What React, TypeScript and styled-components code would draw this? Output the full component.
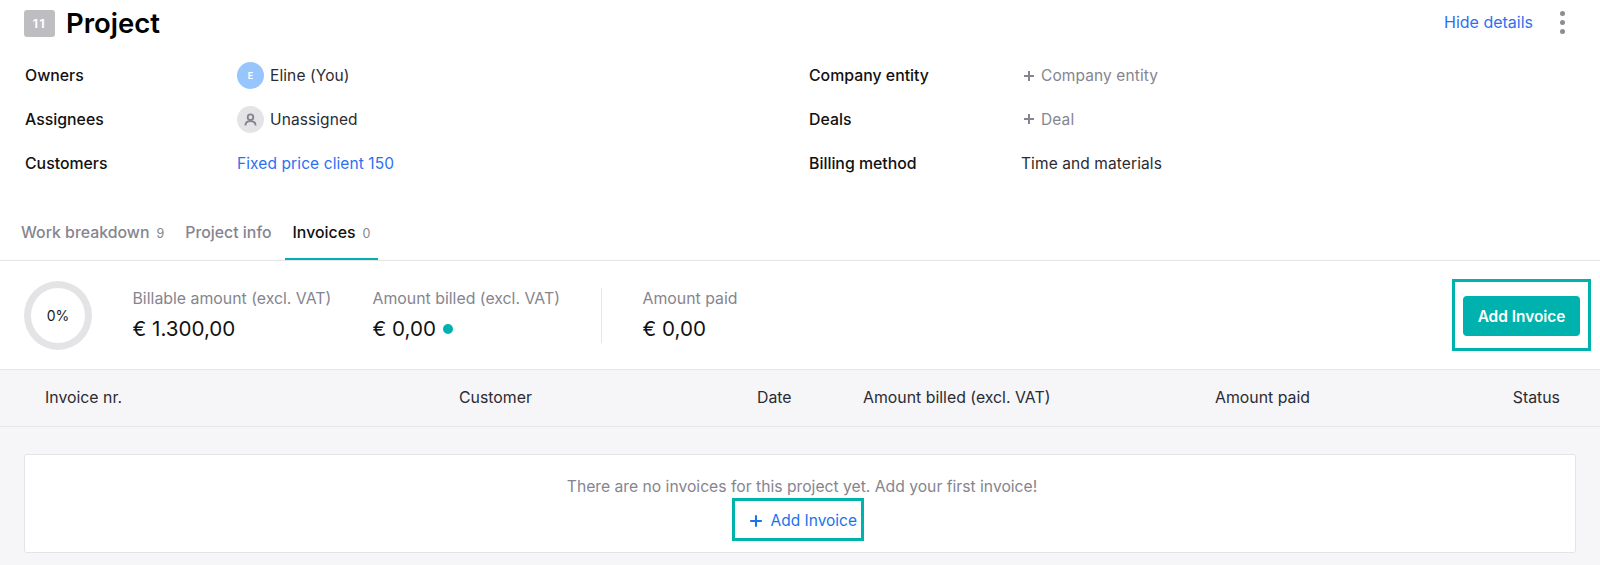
import React from 'react';
import styled, { createGlobalStyle } from 'styled-components';

const GlobalStyle = createGlobalStyle`
  html, body { margin: 0; padding: 0; background: #fff; }
  body { font-family: Inter, "Liberation Sans", sans-serif; color: #1a1a22; width: 1600px; height: 565px; overflow: hidden; }
  * { box-sizing: border-box; }
`;

const TEAL = '#00b2ad';
const BLUE = '#2e6ff2';
const GREY = '#85858f';

const Page = styled.div`
  width: 1600px;
  height: 565px;
  display: flex;
  flex-direction: column;
`;

const Header = styled.header`
  height: 47px;
  padding: 10px 0 0 24px;
  display: flex;
  align-items: flex-start;
`;

const Badge = styled.span`
  width: 31px;
  height: 27px;
  border-radius: 3px;
  background: #bdbdc2;
  color: #fff;
  font-size: 12px;
  font-weight: 700;
  letter-spacing: 1.5px;
  display: flex;
  align-items: center;
  justify-content: center;
`;

const Title = styled.h1`
  margin: 0 0 0 11px;
  font-size: 27.5px;
  line-height: 27px;
  font-weight: 600;
  color: #000;
`;

const HideLink = styled.a`
  margin-left: auto;
  font-size: 16px;
  line-height: 24px;
  color: ${BLUE};
`;

const Kebab = styled.span`
  margin: 1px 35px 0 27px;
  display: flex;
  flex-direction: column;
  gap: 4px;
  i {
    width: 5px;
    height: 5px;
    border-radius: 50%;
    background: #8c8c94;
  }
`;

const Details = styled.section`
  height: 160px;
  padding: 7px 0 0 25px;
  display: grid;
  grid-template-columns: 212px 572px 212px 1fr;
  grid-template-rows: 43px 44px 44px;
  align-items: center;
  font-size: 15.5px;
`;

const Label = styled.div`
  font-size: 15.85px;
  font-weight: 500;
  color: #111;
`;

const Value = styled.div<{ $color?: string }>`
  display: flex;
  align-items: center;
  gap: 6px;
  letter-spacing: 0.1px;
  color: ${(p) => p.$color || '#2b2b33'};
`;

const Avatar = styled.span<{ $bg: string }>`
  width: 27px;
  height: 27px;
  border-radius: 50%;
  background: ${(p) => p.$bg};
  color: #fff;
  font-size: 9px;
  font-weight: 700;
  display: flex;
  align-items: center;
  justify-content: center;
`;

const AddPrompt = styled(Value)`
  svg {
    margin-left: 2px;
  }
`;

const Tabs = styled.nav`
  height: 54px;
  padding-left: 13px;
  display: flex;
  border-bottom: 1px solid #e6e6e9;
`;

const Tab = styled.div<{ $active?: boolean }>`
  height: 53px;
  padding: 16px 8px 0;
  margin-right: 5px;
  font-size: 15.85px;
  font-weight: 500;
  color: ${(p) => (p.$active ? '#111' : GREY)};
  border-bottom: 2px solid ${(p) => (p.$active ? TEAL : 'transparent')};
  span {
    margin-left: 7px;
    font-size: 12.5px;
    font-weight: 400;
    color: ${GREY};
  }
`;

const Summary = styled.section`
  height: 108px;
  padding: 0 9px 0 24px;
  display: flex;
  align-items: center;
`;

const Ring = styled.div`
  width: 68px;
  height: 69px;
  border-radius: 50%;
  border: 7px solid #e4e4e7;
  font-size: 14px;
  display: flex;
  align-items: center;
  justify-content: center;
  margin-right: 40.5px;
`;

const Stat = styled.div<{ $width: number }>`
  width: ${(p) => p.$width}px;
  height: 55px;
  padding-top: 1px;
`;

const StatDivider = styled.div`
  width: 1px;
  height: 55px;
  background: #e6e6e9;
  margin: 0 41px 0 0;
`;

const StatLabel = styled.div`
  font-size: 15.85px;
  line-height: 20px;
  color: ${GREY};
`;

const StatValue = styled.div`
  margin-top: 7px;
  font-size: 20.6px;
  line-height: 26px;
  color: #111;
  display: flex;
  align-items: center;
  gap: 7px;
  i {
    width: 10px;
    height: 10px;
    border-radius: 50%;
    background: ${TEAL};
  }
`;

const Highlight = styled.div`
  border: 3px solid ${TEAL};
  background: #fff;
`;

const ButtonFrame = styled(Highlight)`
  margin-left: auto;
  padding: 14px 8px 12px;
`;

const AddButton = styled.button`
  width: 117px;
  height: 40px;
  border: 0;
  border-radius: 4px;
  background: ${TEAL};
  color: #fff;
  font-family: inherit;
  font-size: 15.4px;
  font-weight: 600;
  display: block;
`;

const TableArea = styled.section`
  flex: 1;
  background: #f6f6f8;
  border-top: 1px solid #e6e6e9;
`;

const TableHead = styled.div`
  height: 57px;
  display: grid;
  grid-template-columns: 414px 298px 106px 352px 1fr;
  align-items: center;
  padding: 0 40px 2px 45px;
  font-size: 15.85px;
  color: #2b2b33;
  border-bottom: 1px solid #e6e6e9;
`;

const HeadCell = styled.div<{ $right?: boolean }>`
  display: flex;
  justify-content: ${(p) => (p.$right ? 'space-between' : 'flex-start')};
`;

const Empty = styled.div`
  margin: 27px 24px 0;
  height: 99px;
  background: #fff;
  border: 1px solid #e4e4e8;
  border-radius: 3px;
  padding-top: 22px;
  display: flex;
  flex-direction: column;
  align-items: center;
`;

const EmptyText = styled.div`
  margin-left: 4px;
  font-size: 15.7px;
  line-height: 20px;
  color: ${GREY};
`;

const InlineFrame = styled(Highlight)`
  width: 132px;
  height: 43px;
  margin: 1px 4px 0 0;
  display: flex;
  align-items: center;
  justify-content: flex-end;
  gap: 8px;
  padding: 2px 4px 0 0;
  font-size: 15.5px;
  color: #1a73e8;
`;

const Plus = ({ size, color, width }: { size: number; color: string; width: number }) => (
  <svg width={size} height={size} viewBox="0 0 12 12" fill="none" stroke={color} strokeWidth={width}>
    <path d="M6 1v10M1 6h10" />
  </svg>
);

const UserIcon = () => (
  <svg width="13" height="13" viewBox="0 0 14 14" fill="none" stroke="#85858f" strokeWidth="2">
    <circle cx="7" cy="4.5" r="3" />
    <path d="M1.5 13.5c0-3 2.2-4.8 5.5-4.8s5.500 1.800 5.500 4.800" />
  </svg>
);

export default function App() {
  return (
    <Page>
      <GlobalStyle />
      <Header>
        <Badge>11</Badge>
        <Title>Project</Title>
        <HideLink>Hide details</HideLink>
        <Kebab>
          <i />
          <i />
          <i />
        </Kebab>
      </Header>
      <Details>
        <Label>Owners</Label>
        <Value>
          <Avatar $bg="#97c5fd">E</Avatar>
          Eline (You)
        </Value>
        <Label>Company entity</Label>
        <AddPrompt $color={GREY}>
          <Plus size={12} color="#85858f" width={2} />
          Company entity
        </AddPrompt>
        <Label>Assignees</Label>
        <Value>
          <Avatar $bg="#e4e4e7">
            <UserIcon />
          </Avatar>
          Unassigned
        </Value>
        <Label>Deals</Label>
        <AddPrompt $color={GREY}>
          <Plus size={12} color="#85858f" width={2} />
          Deal
        </AddPrompt>
        <Label>Customers</Label>
        <Value $color={BLUE}>Fixed price client 150</Value>
        <Label>Billing method</Label>
        <Value>Time and materials</Value>
      </Details>
      <Tabs>
        <Tab>
          Work breakdown<span>9</span>
        </Tab>
        <Tab>Project info</Tab>
        <Tab $active>
          Invoices<span>0</span>
        </Tab>
      </Tabs>
      <Summary>
        <Ring>0%</Ring>
        <Stat $width={240}>
          <StatLabel>Billable amount (excl. VAT)</StatLabel>
          <StatValue>€ 1.300,00</StatValue>
        </Stat>
        <Stat $width={228}>
          <StatLabel>Amount billed (excl. VAT)</StatLabel>
          <StatValue>
            € 0,00 <i />
          </StatValue>
        </Stat>
        <StatDivider />
        <Stat $width={200}>
          <StatLabel>Amount paid</StatLabel>
          <StatValue>€ 0,00</StatValue>
        </Stat>
        <ButtonFrame>
          <AddButton>Add Invoice</AddButton>
        </ButtonFrame>
      </Summary>
      <TableArea>
        <TableHead>
          <HeadCell>Invoice nr.</HeadCell>
          <HeadCell>Customer</HeadCell>
          <HeadCell>Date</HeadCell>
          <HeadCell>Amount billed (excl. VAT)</HeadCell>
          <HeadCell $right>
            Amount paid
            <span>Status</span>
          </HeadCell>
        </TableHead>
        <Empty>
          <EmptyText>There are no invoices for this project yet. Add your first invoice!</EmptyText>
          <InlineFrame>
            <Plus size={14} color="#1a73e8" width={1.8} />
            Add Invoice
          </InlineFrame>
        </Empty>
      </TableArea>
    </Page>
  );
}
